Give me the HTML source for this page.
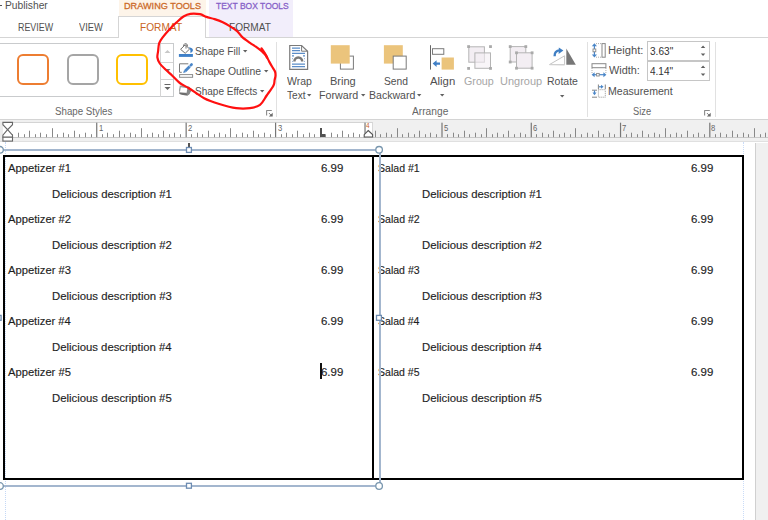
<!DOCTYPE html>
<html><head><meta charset="utf-8"><style>
html,body{margin:0;padding:0;}
body{width:768px;height:520px;position:relative;overflow:hidden;background:#fff;font-family:"Liberation Sans", sans-serif;}
.t{position:absolute;white-space:nowrap;line-height:1;-webkit-text-stroke:0.15px currentColor;}
</style></head><body>
<div style="position:absolute;left:118.5px;top:0px;width:87px;height:16.5px;background:#fdf4e9"></div>
<div style="position:absolute;left:209.2px;top:0px;width:84.3px;height:37.3px;background:#f2eefb"></div>
<div style="position:absolute;left:0px;top:37px;width:118.5px;height:1px;background:#d5d5d5"></div>
<div style="position:absolute;left:205.5px;top:37px;width:562.5px;height:1px;background:#d5d5d5"></div>
<div style="position:absolute;left:118px;top:16px;width:88px;height:22px;border:1px solid #d5d5d5;border-bottom:none;background:#fff;box-sizing:border-box"></div>
<div style="position:absolute;left:0px;top:5.2px;width:2.4px;height:1.1px;background:#555"></div>
<div class="t" style="left:5.38px;top:0.18px;font-size:10.89px;color:#505050;transform:scaleX(0.943);transform-origin:0 0;-webkit-text-stroke:0.0px currentColor;">Publisher</div>
<div class="t" style="left:124.07px;top:0.60px;font-size:9.92px;color:#cc6a28;transform:scaleX(0.923);transform-origin:0 0;-webkit-text-stroke:0.3px currentColor;">DRAWING TOOLS</div>
<div class="t" style="left:215.59px;top:0.60px;font-size:9.92px;color:#8660c8;transform:scaleX(0.858);transform-origin:0 0;-webkit-text-stroke:0.3px currentColor;">TEXT BOX TOOLS</div>
<div class="t" style="left:17.99px;top:21.78px;font-size:10.89px;color:#505050;transform:scaleX(0.818);transform-origin:0 0;-webkit-text-stroke:0.0px currentColor;">REVIEW</div>
<div class="t" style="left:78.65px;top:21.56px;font-size:11.03px;color:#505050;transform:scaleX(0.848);transform-origin:0 0;-webkit-text-stroke:0.0px currentColor;">VIEW</div>
<div class="t" style="left:140.09px;top:21.58px;font-size:10.89px;color:#c8641e;transform:scaleX(0.933);transform-origin:0 0;-webkit-text-stroke:0.0px currentColor;">FORMAT</div>
<div class="t" style="left:229.39px;top:21.58px;font-size:10.89px;color:#505050;transform:scaleX(0.928);transform-origin:0 0;-webkit-text-stroke:0.0px currentColor;">FORMAT</div>
<div style="position:absolute;left:0px;top:118.5px;width:768px;height:1px;background:#d4d4d4"></div>
<div style="position:absolute;left:0px;top:43px;width:174px;height:54px;border:1px solid #c9cbcd;border-left:none;box-sizing:border-box;background:#fff"></div>
<div style="position:absolute;left:160.2px;top:43px;width:1px;height:54px;background:#d4d4d4"></div>
<div style="position:absolute;left:161px;top:62px;width:12px;height:1px;background:#d4d4d4"></div>
<div style="position:absolute;left:161px;top:78.5px;width:12px;height:1px;background:#d4d4d4"></div>
<div style="position:absolute;left:17px;top:53.5px;width:31.5px;height:31px;border:2px solid #ed7d31;border-radius:6px;box-sizing:border-box"></div>
<div style="position:absolute;left:67px;top:53.5px;width:31.5px;height:31px;border:2px solid #a5a5a5;border-radius:6px;box-sizing:border-box"></div>
<div style="position:absolute;left:116px;top:53.5px;width:31.5px;height:31px;border:2px solid #ffc000;border-radius:6px;box-sizing:border-box"></div>
<svg style="position:absolute;left:161px;top:43px" width="13" height="54"><path d="M3.5 10 L6.5 7 L9.5 10Z" fill="#c8c8c8"/><path d="M3.5 26 L6.5 29 L9.5 26Z" fill="#777"/><rect x="3.5" y="41" width="6" height="1" fill="#666"/><path d="M3.5 44 L6.5 47 L9.5 44Z" fill="#666"/></svg>
<div class="t" style="left:55.26px;top:107.24px;font-size:10.47px;color:#666;transform:scaleX(0.929);transform-origin:0 0;-webkit-text-stroke:0.0px currentColor;">Shape Styles</div>
<div class="t" style="left:412.25px;top:107.24px;font-size:10.47px;color:#666;transform:scaleX(0.975);transform-origin:0 0;-webkit-text-stroke:0.0px currentColor;">Arrange</div>
<div class="t" style="left:633.28px;top:107.24px;font-size:10.47px;color:#666;transform:scaleX(0.89);transform-origin:0 0;-webkit-text-stroke:0.0px currentColor;">Size</div>
<div style="position:absolute;left:276px;top:41.5px;width:1px;height:75px;background:#e1e1e1"></div>
<div style="position:absolute;left:586.6px;top:41.5px;width:1px;height:75px;background:#e1e1e1"></div>
<div style="position:absolute;left:714.5px;top:41.5px;width:1px;height:75px;background:#e1e1e1"></div>
<svg style="position:absolute;left:266px;top:109.5px" width="9" height="9"><path d="M0.6 0.35 H5.8 M0.6 0.35 V5.4" stroke="#8a8a8a" stroke-width="1.1" fill="none"/><path d="M2.9 6.4 L6.7 6.4 L6.7 2.7 Z" fill="#666"/><path d="M3 3.1 L5.2 5.3" stroke="#777" stroke-width="1"/></svg>
<svg style="position:absolute;left:704px;top:109.5px" width="9" height="9"><path d="M0.6 0.35 H5.8 M0.6 0.35 V5.4" stroke="#8a8a8a" stroke-width="1.1" fill="none"/><path d="M2.9 6.4 L6.7 6.4 L6.7 2.7 Z" fill="#666"/><path d="M3 3.1 L5.2 5.3" stroke="#777" stroke-width="1"/></svg>
<div class="t" style="left:195.04px;top:45.66px;font-size:11.03px;color:#505050;transform:scaleX(0.922);transform-origin:0 0;-webkit-text-stroke:0.0px currentColor;">Shape Fill</div>
<div class="t" style="left:195.23px;top:65.78px;font-size:10.89px;color:#505050;transform:scaleX(0.957);transform-origin:0 0;-webkit-text-stroke:0.0px currentColor;">Shape Outline</div>
<div class="t" style="left:195.25px;top:86.08px;font-size:10.89px;color:#505050;transform:scaleX(0.921);transform-origin:0 0;-webkit-text-stroke:0.0px currentColor;">Shape Effects</div>
<svg style="position:absolute;left:243.2px;top:50.2px" width="6" height="4"><path d="M0 0 H4.4 L2.2 2.5Z" fill="#606060"/></svg>
<svg style="position:absolute;left:263.8px;top:70.2px" width="6" height="4"><path d="M0 0 H4.4 L2.2 2.5Z" fill="#606060"/></svg>
<svg style="position:absolute;left:260.4px;top:90.4px" width="6" height="4"><path d="M0 0 H4.4 L2.2 2.5Z" fill="#606060"/></svg>
<svg style="position:absolute;left:176px;top:40px" width="20" height="60">
<path d="M7.6 8.2 Q7 3.6 9.6 3.6 Q11.6 3.6 11.6 6.4" fill="none" stroke="#777" stroke-width="1"/>
<path d="M9.2 4.8 L13.6 9 L9.2 13.3 L4.6 9.3 Z" fill="#fff" stroke="#707070" stroke-width="1"/>
<path d="M10 5 V8.6" stroke="#777" stroke-width="1"/>
<path d="M12.8 7.2 Q17.6 7.8 16.8 11 Q16 12.6 14.4 13 Q15.4 10.2 12.8 7.2 Z" fill="#3f7fc6"/>
<rect x="2.9" y="14" width="14" height="2.9" fill="#3f80c8"/>
<path d="M12.3 23.8 H3.5 V32.3 H5.8" fill="none" stroke="#7a7a7a" stroke-width="1"/>
<path d="M9.2 30.9 L13.7 26.4" stroke="#4a86c8" stroke-width="2.8"/>
<path d="M14.7 25.4 L15.6 24.5" stroke="#4a86c8" stroke-width="2.6" stroke-linecap="round"/>
<path d="M7.1 32.9 L8.1 29.9 L10.2 32 Z" fill="#4a86c8"/>
<rect x="3.6" y="34.6" width="13" height="2.7" fill="#fff" stroke="#8a8a8a" stroke-width="1"/>
<path d="M3.8 45.6 Q8 45.6 12.9 46.4 Q14.4 47.2 14.8 51.2 Q14 54.2 11.6 55.6 Q6.5 55.2 3.6 54 Q2.4 50 3.8 45.6 Z" fill="#9a9a9a"/>
<path d="M3.4 52.6 L10.6 53.2 L11.6 55.6 Q6.5 55.4 3.6 54 Z" fill="#6e6e6e"/>
<path d="M10.6 53.2 L11.4 48.2 L13.8 47.6 Q14.6 50 14.6 51.4 Q14 54 11.6 55.6 Z" fill="#888"/>
<path d="M4.8 47.2 L11.4 48.2 L10.6 52.8 L3.9 52.3 Z" fill="#fff"/>
</svg>
<svg style="position:absolute;left:286px;top:42px" width="24" height="30">
<path d="M3.75 3.5 H15.6 L21.6 9.2 V27.4 H3.75 Z" fill="#fff" stroke="#7a7a7a" stroke-width="1.2"/>
<path d="M15.6 3.5 V9.2 H21.6" fill="none" stroke="#7a7a7a" stroke-width="1"/>
<path d="M6 6.05 H14.1 M6 8.65 H14.1 M6 11.4 H19 M6 13.9 H8 M17 13.9 H19 M6 22.1 H19 M6 24.7 H19" stroke="#5b8dc8" stroke-width="1.3"/>
<path d="M6.3 16.7 H7 M18 16.7 H18.7 M6.3 19.4 H7 M18 19.4 H18.7" stroke="#5b8dc8" stroke-width="1"/>
<path d="M8.4 19.4 A3.9 3.9 0 0 1 16.2 19.4" stroke="#7a7a7a" stroke-width="2.5" fill="none"/>
</svg>
<div class="t" style="left:286.75px;top:75.78px;font-size:10.89px;color:#505050;transform:scaleX(0.965);transform-origin:0 0;-webkit-text-stroke:0.0px currentColor;">Wrap</div>
<div class="t" style="left:286.55px;top:89.76px;font-size:11.03px;color:#505050;transform:scaleX(0.916);transform-origin:0 0;-webkit-text-stroke:0.0px currentColor;">Text</div>
<svg style="position:absolute;left:330px;top:44px" width="26" height="28">
<rect x="10.4" y="12.1" width="13" height="13" fill="#fff" stroke="#7a7a7a"/>
<rect x="0.8" y="1.2" width="18.9" height="18.4" fill="#ebc47c"/>
</svg>
<div class="t" style="left:329.52px;top:75.78px;font-size:10.89px;color:#505050;transform:scaleX(1.014);transform-origin:0 0;-webkit-text-stroke:0.0px currentColor;">Bring</div>
<div class="t" style="left:319.14px;top:89.76px;font-size:11.03px;color:#505050;transform:scaleX(0.971);transform-origin:0 0;-webkit-text-stroke:0.0px currentColor;">Forward</div>
<svg style="position:absolute;left:383px;top:44px" width="26" height="28">
<rect x="0.9" y="1.2" width="18.9" height="18.4" fill="#ebc47c"/>
<rect x="10.2" y="12.1" width="13" height="13" fill="#fff" stroke="#7a7a7a"/>
</svg>
<div class="t" style="left:383.64px;top:75.78px;font-size:10.89px;color:#505050;transform:scaleX(0.945);transform-origin:0 0;-webkit-text-stroke:0.0px currentColor;">Send</div>
<div class="t" style="left:368.65px;top:89.76px;font-size:11.03px;color:#505050;transform:scaleX(0.959);transform-origin:0 0;-webkit-text-stroke:0.0px currentColor;">Backward</div>
<svg style="position:absolute;left:429px;top:44px" width="28" height="28">
<path d="M1.5 1.2 V25.6" stroke="#666"/>
<rect x="3.5" y="4.7" width="11.3" height="5.6" fill="#fff" stroke="#7a7a7a"/>
<rect x="12.6" y="13.5" width="12.3" height="12.1" fill="#ebc47c"/>
<path d="M3.6 19.6 L7.6 16.2 V18.4 H11 V20.8 H7.6 V23 Z" fill="#3f7fc6"/>
</svg>
<div class="t" style="left:430.04px;top:75.78px;font-size:10.89px;color:#505050;transform:scaleX(1.044);transform-origin:0 0;-webkit-text-stroke:0.0px currentColor;">Align</div>
<svg style="position:absolute;left:307.3px;top:94px" width="6" height="4"><path d="M0 0 H4.4 L2.2 2.5Z" fill="#606060"/></svg>
<svg style="position:absolute;left:360.5px;top:94px" width="6" height="4"><path d="M0 0 H4.4 L2.2 2.5Z" fill="#606060"/></svg>
<svg style="position:absolute;left:416.7px;top:94px" width="6" height="4"><path d="M0 0 H4.4 L2.2 2.5Z" fill="#606060"/></svg>
<svg style="position:absolute;left:440px;top:94px" width="6" height="4"><path d="M0 0 H4.4 L2.2 2.5Z" fill="#606060"/></svg>
<svg style="position:absolute;left:559.5px;top:94.5px" width="6" height="4"><path d="M0 0 H4.4 L2.2 2.5Z" fill="#606060"/></svg>
<svg style="position:absolute;left:464px;top:42px" width="30" height="30">
<rect x="4.8" y="4.8" width="15.6" height="15.4" fill="#f3eef3" stroke="#b4b4b4"/>
<rect x="10.9" y="10.9" width="15.6" height="15.4" fill="#f3eef3" fill-opacity="0.6" stroke="#b4b4b4"/>
<rect x="3.2" y="3.2" width="2.8" height="2.8" fill="#aaa"/><rect x="25.1" y="3.2" width="2.8" height="2.8" fill="#aaa"/>
<rect x="3.2" y="25" width="2.8" height="2.8" fill="#aaa"/><rect x="25.1" y="25" width="2.8" height="2.8" fill="#aaa"/>
</svg>
<div class="t" style="left:464.26px;top:75.78px;font-size:10.89px;color:#a6a6a6;transform:scaleX(0.983);transform-origin:0 0;-webkit-text-stroke:0.0px currentColor;">Group</div>
<svg style="position:absolute;left:505px;top:42px" width="30" height="30">
<rect x="5.2" y="4.6" width="15.6" height="15.4" fill="#f3eef3" stroke="#b4b4b4"/>
<rect x="11.5" y="10.8" width="15.6" height="15.4" fill="#f3eef3" stroke="#b4b4b4"/>
<g fill="#aaa">
<rect x="3.8" y="3.2" width="2.8" height="2.8"/><rect x="19.4" y="3.2" width="2.8" height="2.8"/><rect x="3.8" y="18.6" width="2.8" height="2.8"/>
<rect x="10.1" y="9.4" width="2.8" height="2.8"/><rect x="25.7" y="9.4" width="2.8" height="2.8"/>
<rect x="10.1" y="24.8" width="2.8" height="2.8"/><rect x="25.7" y="24.8" width="2.8" height="2.8"/>
</g>
</svg>
<div class="t" style="left:499.58px;top:75.78px;font-size:10.89px;color:#a6a6a6;transform:scaleX(1.009);transform-origin:0 0;-webkit-text-stroke:0.0px currentColor;">Ungroup</div>
<svg style="position:absolute;left:547px;top:42px" width="32" height="30">
<path d="M2.6 22.5 L17.6 13.8 V22.8 Z" fill="#fff" stroke="#c4c4c4" stroke-width="1"/>
<path d="M2.6 22.6 H17.6" stroke="#d0d0d0" stroke-width="1.2"/>
<path d="M19.3 6.6 L28.8 22.8 H19.3 Z" fill="#777"/>
<path d="M7.6 14.2 Q7.4 8.6 13 8.4" stroke="#3f7fc4" stroke-width="2.4" fill="none"/>
<path d="M11.8 5.6 L16.4 8.6 L11.6 12 Z" fill="#3f7fc4"/>
</svg>
<div class="t" style="left:547.26px;top:75.78px;font-size:10.89px;color:#505050;transform:scaleX(0.964);transform-origin:0 0;-webkit-text-stroke:0.0px currentColor;">Rotate</div>
<svg style="position:absolute;left:588px;top:40px" width="20" height="60">
<path d="M6.4 5 V16" stroke="#4a86c8" stroke-width="1.2"/>
<path d="M3.8 6.2 L6.4 3.2 L9 6.2 Z M3.8 14.6 L6.4 17.6 L9 14.6 Z" fill="#4a86c8"/>
<rect x="5" y="9" width="2.8" height="2.8" fill="#fff" stroke="#888" stroke-width="0.9"/>
<path d="M8 3.6 H13 M8 17.2 H13" stroke="#999" stroke-width="0.8" stroke-dasharray="1 1"/>
<rect x="14" y="3.6" width="3.2" height="13.6" fill="#fff" stroke="#888" stroke-width="1"/>
<rect x="4" y="23.7" width="13.9" height="4" fill="#fff" stroke="#888" stroke-width="1"/>
<path d="M4 28 V33 M17.9 28 V33" stroke="#999" stroke-width="0.8" stroke-dasharray="1 1"/>
<path d="M5.5 34.7 H16.5" stroke="#4a86c8" stroke-width="1.2"/>
<path d="M6.6 32.2 L3.6 34.7 L6.6 37.2 Z M15.4 32.2 L18.4 34.7 L15.4 37.2 Z" fill="#4a86c8"/>
<rect x="8.6" y="33.4" width="2.6" height="2.6" fill="#fff" stroke="#888" stroke-width="0.9"/>
<rect x="10.4" y="49.7" width="6.9" height="7.5" fill="none" stroke="#888" stroke-width="0.9" stroke-dasharray="1 1"/>
<path d="M10.4 44.5 V49 M17.3 44.5 V49" stroke="#777" stroke-width="0.9"/>
<path d="M11 46.8 H13.5" stroke="#4a86c8" stroke-width="1.2"/>
<path d="M13 44.8 L15.6 46.8 L13 48.8 Z" fill="#4a86c8"/>
<path d="M4 50.2 H9 M4 57.2 H9" stroke="#777" stroke-width="0.9"/>
<path d="M6.5 50.5 V53" stroke="#4a86c8" stroke-width="1.2"/>
<path d="M4.5 52.6 L6.5 55.2 L8.5 52.6 Z" fill="#4a86c8"/>
</svg>
<div class="t" style="left:608.31px;top:45.46px;font-size:11.03px;color:#505050;transform:scaleX(1.014);transform-origin:0 0;-webkit-text-stroke:0.0px currentColor;">Height:</div>
<div class="t" style="left:609.15px;top:65.74px;font-size:10.47px;color:#505050;transform:scaleX(1.04);transform-origin:0 0;-webkit-text-stroke:0.0px currentColor;">Width:</div>
<div class="t" style="left:608.35px;top:85.86px;font-size:11.03px;color:#505050;transform:scaleX(0.96);transform-origin:0 0;-webkit-text-stroke:0.0px currentColor;">Measurement</div>
<div style="position:absolute;left:647.2px;top:40.7px;width:63px;height:20px;border:1px solid #c6c6c6;box-sizing:border-box;background:#fff"></div>
<div style="position:absolute;left:647.2px;top:60.6px;width:63px;height:20.3px;border:1px solid #c6c6c6;box-sizing:border-box;background:#fff"></div>
<div class="t" style="left:650.0px;top:46.38px;font-size:10.89px;color:#333;transform:scaleX(0.928);transform-origin:0 0;-webkit-text-stroke:0.0px currentColor;">3.63"</div>
<div class="t" style="left:650.15px;top:66.64px;font-size:10.47px;color:#333;transform:scaleX(0.959);transform-origin:0 0;-webkit-text-stroke:0.0px currentColor;">4.14"</div>
<svg style="position:absolute;left:700px;top:41px" width="8" height="20"><path d="M0.8 7 L3.05 4.6 L5.3 7Z M0.8 12.6 L3.05 15 L5.3 12.6Z" fill="#606060"/></svg>
<svg style="position:absolute;left:700px;top:60.8px" width="8" height="20"><path d="M0.8 7 L3.05 4.6 L5.3 7Z M0.8 12.6 L3.05 15 L5.3 12.6Z" fill="#606060"/></svg>
<div style="position:absolute;left:0px;top:119.5px;width:768px;height:22.7px;background:#f0f0f0"></div>
<div style="position:absolute;left:0px;top:141.2px;width:768px;height:1px;background:#e0e0e0"></div>
<div style="position:absolute;left:0px;top:121.8px;width:373px;height:15.7px;background:#fff;border-top:1px solid #d4d4d4;border-right:1px solid #d8d8d8;box-sizing:border-box"></div>
<div style="position:absolute;left:0px;top:137.2px;width:768px;height:1px;background:#c8c8c8"></div>
<svg style="position:absolute;left:0;top:119px" width="768" height="24"><rect x="12" y="15.20" width="1" height="3" fill="#888"/><rect x="18" y="13.70" width="1" height="4.5" fill="#888"/><rect x="24" y="15.20" width="1" height="3" fill="#888"/><rect x="29" y="11.70" width="1" height="6.5" fill="#888"/><rect x="35" y="15.20" width="1" height="3" fill="#888"/><rect x="40" y="13.70" width="1" height="4.5" fill="#888"/><rect x="46" y="15.20" width="1" height="3" fill="#888"/><rect x="52" y="9.20" width="1" height="9" fill="#888"/><rect x="57" y="15.20" width="1" height="3" fill="#888"/><rect x="63" y="13.70" width="1" height="4.5" fill="#888"/><rect x="68" y="15.20" width="1" height="3" fill="#888"/><rect x="74" y="11.70" width="1" height="6.5" fill="#888"/><rect x="79" y="15.20" width="1" height="3" fill="#888"/><rect x="85" y="13.70" width="1" height="4.5" fill="#888"/><rect x="91" y="15.20" width="1" height="3" fill="#888"/><rect x="96.13" y="3.70" width="1.2" height="14.5" fill="#777"/><rect x="102" y="15.20" width="1" height="3" fill="#888"/><rect x="107" y="13.70" width="1" height="4.5" fill="#888"/><rect x="113" y="15.20" width="1" height="3" fill="#888"/><rect x="119" y="11.70" width="1" height="6.5" fill="#888"/><rect x="124" y="15.20" width="1" height="3" fill="#888"/><rect x="130" y="13.70" width="1" height="4.5" fill="#888"/><rect x="135" y="15.20" width="1" height="3" fill="#888"/><rect x="141" y="9.20" width="1" height="9" fill="#888"/><rect x="147" y="15.20" width="1" height="3" fill="#888"/><rect x="152" y="13.70" width="1" height="4.5" fill="#888"/><rect x="158" y="15.20" width="1" height="3" fill="#888"/><rect x="163" y="11.70" width="1" height="6.5" fill="#888"/><rect x="169" y="15.20" width="1" height="3" fill="#888"/><rect x="174" y="13.70" width="1" height="4.5" fill="#888"/><rect x="180" y="15.20" width="1" height="3" fill="#888"/><rect x="185.56" y="3.70" width="1.2" height="14.5" fill="#777"/><rect x="191" y="15.20" width="1" height="3" fill="#888"/><rect x="197" y="13.70" width="1" height="4.5" fill="#888"/><rect x="202" y="15.20" width="1" height="3" fill="#888"/><rect x="208" y="11.70" width="1" height="6.5" fill="#888"/><rect x="214" y="15.20" width="1" height="3" fill="#888"/><rect x="219" y="13.70" width="1" height="4.5" fill="#888"/><rect x="225" y="15.20" width="1" height="3" fill="#888"/><rect x="230" y="9.20" width="1" height="9" fill="#888"/><rect x="236" y="15.20" width="1" height="3" fill="#888"/><rect x="242" y="13.70" width="1" height="4.5" fill="#888"/><rect x="247" y="15.20" width="1" height="3" fill="#888"/><rect x="253" y="11.70" width="1" height="6.5" fill="#888"/><rect x="258" y="15.20" width="1" height="3" fill="#888"/><rect x="264" y="13.70" width="1" height="4.5" fill="#888"/><rect x="270" y="15.20" width="1" height="3" fill="#888"/><rect x="274.99" y="3.70" width="1.2" height="14.5" fill="#777"/><rect x="281" y="15.20" width="1" height="3" fill="#888"/><rect x="286" y="13.70" width="1" height="4.5" fill="#888"/><rect x="292" y="15.20" width="1" height="3" fill="#888"/><rect x="297" y="11.70" width="1" height="6.5" fill="#888"/><rect x="303" y="15.20" width="1" height="3" fill="#888"/><rect x="309" y="13.70" width="1" height="4.5" fill="#888"/><rect x="314" y="15.20" width="1" height="3" fill="#888"/><rect x="320" y="9.20" width="1" height="9" fill="#888"/><rect x="325" y="15.20" width="1" height="3" fill="#888"/><rect x="331" y="13.70" width="1" height="4.5" fill="#888"/><rect x="337" y="15.20" width="1" height="3" fill="#888"/><rect x="342" y="11.70" width="1" height="6.5" fill="#888"/><rect x="348" y="15.20" width="1" height="3" fill="#888"/><rect x="353" y="13.70" width="1" height="4.5" fill="#888"/><rect x="359" y="15.20" width="1" height="3" fill="#888"/><rect x="364.42" y="3.70" width="1.2" height="14.5" fill="#777"/><rect x="375" y="11.70" width="1" height="6.5" fill="#888"/><rect x="380" y="15.20" width="1" height="3" fill="#888"/><rect x="386" y="13.70" width="1" height="4.5" fill="#888"/><rect x="391" y="15.20" width="1" height="3" fill="#888"/><rect x="397" y="9.20" width="1" height="9" fill="#888"/><rect x="402" y="15.20" width="1" height="3" fill="#888"/><rect x="408" y="13.70" width="1" height="4.5" fill="#888"/><rect x="414" y="15.20" width="1" height="3" fill="#888"/><rect x="419" y="11.70" width="1" height="6.5" fill="#888"/><rect x="425" y="15.20" width="1" height="3" fill="#888"/><rect x="430" y="13.70" width="1" height="4.5" fill="#888"/><rect x="436" y="15.20" width="1" height="3" fill="#888"/><rect x="441.40" y="3.70" width="1.2" height="14.5" fill="#777"/><rect x="447" y="15.20" width="1" height="3" fill="#888"/><rect x="453" y="13.70" width="1" height="4.5" fill="#888"/><rect x="458" y="15.20" width="1" height="3" fill="#888"/><rect x="464" y="11.70" width="1" height="6.5" fill="#888"/><rect x="469" y="15.20" width="1" height="3" fill="#888"/><rect x="475" y="13.70" width="1" height="4.5" fill="#888"/><rect x="481" y="15.20" width="1" height="3" fill="#888"/><rect x="486" y="9.20" width="1" height="9" fill="#888"/><rect x="492" y="15.20" width="1" height="3" fill="#888"/><rect x="497" y="13.70" width="1" height="4.5" fill="#888"/><rect x="503" y="15.20" width="1" height="3" fill="#888"/><rect x="508" y="11.70" width="1" height="6.5" fill="#888"/><rect x="514" y="15.20" width="1" height="3" fill="#888"/><rect x="520" y="13.70" width="1" height="4.5" fill="#888"/><rect x="525" y="15.20" width="1" height="3" fill="#888"/><rect x="530.67" y="3.70" width="1.2" height="14.5" fill="#777"/><rect x="536" y="15.20" width="1" height="3" fill="#888"/><rect x="542" y="13.70" width="1" height="4.5" fill="#888"/><rect x="548" y="15.20" width="1" height="3" fill="#888"/><rect x="553" y="11.70" width="1" height="6.5" fill="#888"/><rect x="559" y="15.20" width="1" height="3" fill="#888"/><rect x="564" y="13.70" width="1" height="4.5" fill="#888"/><rect x="570" y="15.20" width="1" height="3" fill="#888"/><rect x="575" y="9.20" width="1" height="9" fill="#888"/><rect x="581" y="15.20" width="1" height="3" fill="#888"/><rect x="587" y="13.70" width="1" height="4.5" fill="#888"/><rect x="592" y="15.20" width="1" height="3" fill="#888"/><rect x="598" y="11.70" width="1" height="6.5" fill="#888"/><rect x="603" y="15.20" width="1" height="3" fill="#888"/><rect x="609" y="13.70" width="1" height="4.5" fill="#888"/><rect x="614" y="15.20" width="1" height="3" fill="#888"/><rect x="619.94" y="3.70" width="1.2" height="14.5" fill="#777"/><rect x="626" y="15.20" width="1" height="3" fill="#888"/><rect x="631" y="13.70" width="1" height="4.5" fill="#888"/><rect x="637" y="15.20" width="1" height="3" fill="#888"/><rect x="642" y="11.70" width="1" height="6.5" fill="#888"/><rect x="648" y="15.20" width="1" height="3" fill="#888"/><rect x="654" y="13.70" width="1" height="4.5" fill="#888"/><rect x="659" y="15.20" width="1" height="3" fill="#888"/><rect x="665" y="9.20" width="1" height="9" fill="#888"/><rect x="670" y="15.20" width="1" height="3" fill="#888"/><rect x="676" y="13.70" width="1" height="4.5" fill="#888"/><rect x="681" y="15.20" width="1" height="3" fill="#888"/><rect x="687" y="11.70" width="1" height="6.5" fill="#888"/><rect x="693" y="15.20" width="1" height="3" fill="#888"/><rect x="698" y="13.70" width="1" height="4.5" fill="#888"/><rect x="704" y="15.20" width="1" height="3" fill="#888"/><rect x="709.21" y="3.70" width="1.2" height="14.5" fill="#777"/><rect x="715" y="15.20" width="1" height="3" fill="#888"/><rect x="720" y="13.70" width="1" height="4.5" fill="#888"/><rect x="726" y="15.20" width="1" height="3" fill="#888"/><rect x="732" y="11.70" width="1" height="6.5" fill="#888"/><rect x="737" y="15.20" width="1" height="3" fill="#888"/><rect x="743" y="13.70" width="1" height="4.5" fill="#888"/><rect x="748" y="15.20" width="1" height="3" fill="#888"/><rect x="754" y="9.20" width="1" height="9" fill="#888"/><rect x="760" y="15.20" width="1" height="3" fill="#888"/><rect x="765" y="13.70" width="1" height="4.5" fill="#888"/></svg>
<div class="t" style="left:98.5px;top:123.88px;font-size:9px;color:#666;transform:scaleX(0.85);transform-origin:0 0;-webkit-text-stroke:0.0px currentColor;">1</div>
<div class="t" style="left:188.0px;top:123.88px;font-size:9px;color:#666;transform:scaleX(0.85);transform-origin:0 0;-webkit-text-stroke:0.0px currentColor;">2</div>
<div class="t" style="left:277.5px;top:123.88px;font-size:9px;color:#666;transform:scaleX(0.85);transform-origin:0 0;-webkit-text-stroke:0.0px currentColor;">3</div>
<div class="t" style="left:443.5px;top:123.88px;font-size:9px;color:#666;transform:scaleX(0.85);transform-origin:0 0;-webkit-text-stroke:0.0px currentColor;">5</div>
<div class="t" style="left:532.8px;top:123.88px;font-size:9px;color:#666;transform:scaleX(0.85);transform-origin:0 0;-webkit-text-stroke:0.0px currentColor;">6</div>
<div class="t" style="left:622.0px;top:123.88px;font-size:9px;color:#666;transform:scaleX(0.85);transform-origin:0 0;-webkit-text-stroke:0.0px currentColor;">7</div>
<div class="t" style="left:711.3px;top:123.88px;font-size:9px;color:#666;transform:scaleX(0.85);transform-origin:0 0;-webkit-text-stroke:0.0px currentColor;">8</div>
<div class="t" style="left:366.3px;top:122.45px;font-size:7.5px;color:#c8641e;transform:scaleX(0.85);transform-origin:0 0;-webkit-text-stroke:0.0px currentColor;">4</div>
<div style="position:absolute;left:319.8px;top:128.4px;width:2.6px;height:8.6px;background:#505050"></div>
<div style="position:absolute;left:319.8px;top:134.2px;width:5.7px;height:2.8px;background:#505050"></div>
<div style="position:absolute;left:0px;top:122.3px;width:3.2px;height:19px;background:#ebebeb"></div>
<svg style="position:absolute;left:2px;top:121px" width="12" height="22"><path d="M0.9 1.4 H10.5 V3.75 L5.6 8.7 L0.9 3.75 Z" fill="#fff" stroke="#666" stroke-width="1.1"/><path d="M5.6 8.7 L10.5 14.1 V16.2 H0.9 V14.1 Z" fill="#fff" stroke="#666" stroke-width="1.1"/><rect x="0.9" y="16.2" width="9.6" height="3.9" fill="#fff" stroke="#666" stroke-width="1.1"/></svg>
<svg style="position:absolute;left:363px;top:121px" width="12" height="18"><path d="M5.2 9.5 L9.6 13.6 V16 H1.2 V13.6Z" fill="#fff" stroke="#555" stroke-width="1.1"/></svg>
<div style="position:absolute;left:754.5px;top:142.5px;width:1.5px;height:378px;background:#d0d0d0"></div>
<div style="position:absolute;left:756px;top:142.5px;width:12px;height:378px;background:#f0f0f0"></div>
<div style="position:absolute;left:4.8px;top:142px;width:0px;height:378px;border-left:1px dotted #c4d8f6"></div>
<div style="position:absolute;left:743.2px;top:142px;width:0px;height:14px;border-left:1px dotted #cadcf8"></div>
<div style="position:absolute;left:743.2px;top:479px;width:0px;height:41px;border-left:1px dotted #cadcf8"></div>
<div style="position:absolute;left:3px;top:155px;width:741px;height:25px;display:none"></div>
<div style="position:absolute;left:2.7px;top:155px;width:741.3px;height:325px;border:2px solid #000;box-sizing:border-box"></div>
<div style="position:absolute;left:372.3px;top:155px;width:2px;height:325px;background:#000"></div>
<div class="t" style="left:8.24px;top:163.31px;font-size:11.45px;color:#1e1e1e;transform:scaleX(0.982);transform-origin:0 0;">Appetizer #1</div>
<div class="t" style="left:321.23px;top:163.31px;font-size:11.45px;color:#1e1e1e;transform:scaleX(1.001);transform-origin:0 0;">6.99</div>
<div class="t" style="left:52.49px;top:188.91px;font-size:11.45px;color:#1e1e1e;transform:scaleX(0.992);transform-origin:0 0;">Delicious description #1</div>
<div class="t" style="left:377.82px;top:163.31px;font-size:11.45px;color:#1e1e1e;transform:scaleX(0.923);transform-origin:0 0;">Salad #1</div>
<div class="t" style="left:691.23px;top:163.31px;font-size:11.45px;color:#1e1e1e;transform:scaleX(1.001);transform-origin:0 0;">6.99</div>
<div class="t" style="left:422.49px;top:188.91px;font-size:11.45px;color:#1e1e1e;transform:scaleX(0.992);transform-origin:0 0;">Delicious description #1</div>
<div class="t" style="left:8.24px;top:214.21px;font-size:11.45px;color:#1e1e1e;transform:scaleX(0.982);transform-origin:0 0;">Appetizer #2</div>
<div class="t" style="left:321.23px;top:214.21px;font-size:11.45px;color:#1e1e1e;transform:scaleX(1.001);transform-origin:0 0;">6.99</div>
<div class="t" style="left:52.49px;top:239.81px;font-size:11.45px;color:#1e1e1e;transform:scaleX(0.992);transform-origin:0 0;">Delicious description #2</div>
<div class="t" style="left:377.82px;top:214.21px;font-size:11.45px;color:#1e1e1e;transform:scaleX(0.923);transform-origin:0 0;">Salad #2</div>
<div class="t" style="left:691.23px;top:214.21px;font-size:11.45px;color:#1e1e1e;transform:scaleX(1.001);transform-origin:0 0;">6.99</div>
<div class="t" style="left:422.49px;top:239.81px;font-size:11.45px;color:#1e1e1e;transform:scaleX(0.992);transform-origin:0 0;">Delicious description #2</div>
<div class="t" style="left:8.24px;top:265.11px;font-size:11.45px;color:#1e1e1e;transform:scaleX(0.981);transform-origin:0 0;">Appetizer #3</div>
<div class="t" style="left:321.23px;top:265.11px;font-size:11.45px;color:#1e1e1e;transform:scaleX(1.001);transform-origin:0 0;">6.99</div>
<div class="t" style="left:52.49px;top:290.71px;font-size:11.45px;color:#1e1e1e;transform:scaleX(0.992);transform-origin:0 0;">Delicious description #3</div>
<div class="t" style="left:377.82px;top:265.11px;font-size:11.45px;color:#1e1e1e;transform:scaleX(0.922);transform-origin:0 0;">Salad #3</div>
<div class="t" style="left:691.23px;top:265.11px;font-size:11.45px;color:#1e1e1e;transform:scaleX(1.001);transform-origin:0 0;">6.99</div>
<div class="t" style="left:422.49px;top:290.71px;font-size:11.45px;color:#1e1e1e;transform:scaleX(0.992);transform-origin:0 0;">Delicious description #3</div>
<div class="t" style="left:8.24px;top:316.01px;font-size:11.45px;color:#1e1e1e;transform:scaleX(0.978);transform-origin:0 0;">Appetizer #4</div>
<div class="t" style="left:321.23px;top:316.01px;font-size:11.45px;color:#1e1e1e;transform:scaleX(1.001);transform-origin:0 0;">6.99</div>
<div class="t" style="left:52.49px;top:341.61px;font-size:11.45px;color:#1e1e1e;transform:scaleX(0.99);transform-origin:0 0;">Delicious description #4</div>
<div class="t" style="left:377.83px;top:316.01px;font-size:11.45px;color:#1e1e1e;transform:scaleX(0.918);transform-origin:0 0;">Salad #4</div>
<div class="t" style="left:691.23px;top:316.01px;font-size:11.45px;color:#1e1e1e;transform:scaleX(1.001);transform-origin:0 0;">6.99</div>
<div class="t" style="left:422.49px;top:341.61px;font-size:11.45px;color:#1e1e1e;transform:scaleX(0.99);transform-origin:0 0;">Delicious description #4</div>
<div class="t" style="left:8.24px;top:366.91px;font-size:11.45px;color:#1e1e1e;transform:scaleX(0.98);transform-origin:0 0;">Appetizer #5</div>
<div class="t" style="left:321.23px;top:366.91px;font-size:11.45px;color:#1e1e1e;transform:scaleX(1.001);transform-origin:0 0;">6.99</div>
<div class="t" style="left:52.49px;top:392.51px;font-size:11.45px;color:#1e1e1e;transform:scaleX(0.991);transform-origin:0 0;">Delicious description #5</div>
<div class="t" style="left:377.83px;top:366.91px;font-size:11.45px;color:#1e1e1e;transform:scaleX(0.921);transform-origin:0 0;">Salad #5</div>
<div class="t" style="left:691.23px;top:366.91px;font-size:11.45px;color:#1e1e1e;transform:scaleX(1.001);transform-origin:0 0;">6.99</div>
<div class="t" style="left:422.49px;top:392.51px;font-size:11.45px;color:#1e1e1e;transform:scaleX(0.991);transform-origin:0 0;">Delicious description #5</div>
<div style="position:absolute;left:320.3px;top:363.2px;width:1.8px;height:16px;background:#111"></div>
<div style="position:absolute;left:0px;top:149px;width:380px;height:2px;background:#a3b6ce"></div>
<div style="position:absolute;left:0px;top:485px;width:380px;height:2px;background:#a3b6ce"></div>
<div style="position:absolute;left:378.9px;top:149px;width:2px;height:338px;background:#a3b6ce"></div>
<div style="position:absolute;left:188.1px;top:142.5px;width:1.8px;height:5px;background:#555"></div>
<svg style="position:absolute;left:0;top:140px" width="400" height="360"><circle cx="0" cy="9.8" r="3.3" fill="#fff" stroke="#7896ae" stroke-width="1.3"/><circle cx="379.1" cy="9.8" r="3.3" fill="#fff" stroke="#7896ae" stroke-width="1.3"/><circle cx="0" cy="346" r="3.3" fill="#fff" stroke="#7896ae" stroke-width="1.3"/><circle cx="379.1" cy="346" r="3.3" fill="#fff" stroke="#7896ae" stroke-width="1.3"/><rect x="186.5" y="7.5" width="4.9" height="4.9" fill="#fff" stroke="#6d8cb2" stroke-width="1.3"/><rect x="186.5" y="343.3" width="4.9" height="4.9" fill="#fff" stroke="#6d8cb2" stroke-width="1.3"/><rect x="-3.8" y="175.4" width="4.9" height="4.9" fill="#fff" stroke="#6d8cb2" stroke-width="1.3"/><rect x="376.5" y="175.4" width="4.9" height="4.9" fill="#fff" stroke="#6d8cb2" stroke-width="1.3"/></svg>
<svg style="position:absolute;left:0;top:0" width="768" height="130">
<path d="M190.40 13.80 C193.15 13.42 197.33 13.68 200.00 14.20 C202.67 14.72 203.97 16.08 206.40 16.90 C208.83 17.72 211.87 18.20 214.60 19.10 C217.33 20.00 220.07 21.00 222.80 22.30 C225.53 23.60 228.57 25.38 231.00 26.90 C233.43 28.42 235.57 29.73 237.40 31.40 C239.23 33.07 239.90 34.98 242.00 36.90 C244.10 38.82 247.70 41.27 250.00 42.90 C252.30 44.53 253.80 45.27 255.80 46.70 C257.80 48.13 260.32 50.05 262.00 51.50 C263.68 52.95 264.70 53.72 265.90 55.40 C267.10 57.08 268.18 59.75 269.20 61.60 C270.22 63.45 271.03 64.85 272.00 66.50 C272.97 68.15 274.42 69.97 275.00 71.50 C275.58 73.03 275.57 74.28 275.50 75.70 C275.43 77.12 274.93 78.38 274.60 80.00 C274.27 81.62 274.82 82.82 273.50 85.40 C272.18 87.98 268.95 92.25 266.70 95.50 C264.45 98.75 262.82 102.78 260.00 104.90 C257.18 107.02 253.77 107.65 249.80 108.20 C245.83 108.75 241.28 108.90 236.20 108.20 C231.12 107.50 224.65 105.67 219.30 104.00 C213.95 102.33 209.17 100.83 204.10 98.20 C199.03 95.57 192.95 90.73 188.90 88.20 C184.85 85.67 182.57 85.08 179.80 83.00 C177.03 80.92 174.63 77.90 172.30 75.70 C169.97 73.50 167.88 71.83 165.80 69.80 C163.72 67.77 161.20 65.55 159.80 63.50 C158.40 61.45 157.68 59.55 157.40 57.50 C157.12 55.45 157.80 53.60 158.10 51.20 C158.40 48.80 158.43 45.42 159.20 43.10 C159.97 40.78 160.97 39.62 162.70 37.30 C164.43 34.98 167.28 31.70 169.60 29.20 C171.92 26.70 174.28 24.42 176.60 22.30 C178.92 20.18 181.20 17.92 183.50 16.50 C185.80 15.08 187.65 14.18 190.40 13.80" fill="none" stroke="#ff1010" stroke-width="2.2" stroke-linecap="round" stroke-linejoin="round"/>
<path d="M261.5 48.4 L265 53.5 L267 57.5" fill="none" stroke="#ff1010" stroke-width="2.4" stroke-linecap="round"/>
</svg>
</body></html>
